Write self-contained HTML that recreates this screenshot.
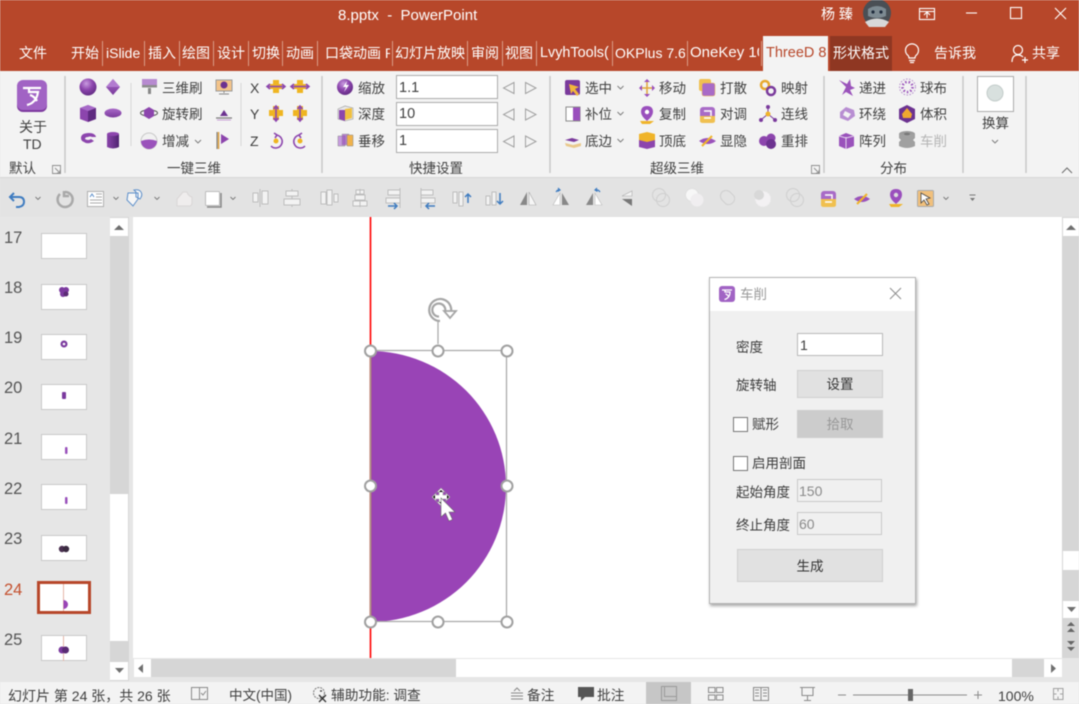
<!DOCTYPE html>
<html lang="zh"><head><meta charset="utf-8"><title>8.pptx - PowerPoint</title>
<style>
html,body{margin:0;padding:0;background:#e6e6e6}
#r{position:relative;width:1079px;height:704px;overflow:hidden;background:#e6e6e6;font-family:"Liberation Sans","Noto Sans CJK SC",sans-serif;color:#404040;font-size:13.5px;filter:blur(.4px)}
.a{position:absolute}
.t{position:absolute;white-space:pre;line-height:20px;height:20px}
.w{color:#fff;font-size:14px}
.n{font-size:16.5px;color:#555;left:4px}
.c{overflow:hidden}
.th{position:absolute;left:41px;width:44px;height:24px;background:#fff;border:1px solid #c9c9c9}
.in{position:absolute;left:396px;width:100px;height:22px;background:#fff;border:1px solid #ababab}
.d{color:#3c3c3c}
.btn{position:absolute;box-sizing:border-box;background:#e1e1e1;border:1px solid #cfcfcf;text-align:center;line-height:28px;color:#333}
.s{position:absolute;box-sizing:border-box}
svg{position:absolute;left:0;top:0}
</style></head><body><div id="r">
<!-- backgrounds -->
<div class="a" style="left:0;top:0;width:1079px;height:71px;background:#b7472a"></div>
<div class="a" style="left:0;top:71px;width:1079px;height:106px;background:#f3f3f3"></div>
<div class="a" style="left:0;top:177px;width:1079px;height:1px;background:#d6d6d6"></div>
<div class="a" style="left:0;top:178px;width:1079px;height:39px;background:#e3e3e3"></div>
<div class="a" style="left:133px;top:217px;width:929px;height:441px;background:#fff"></div>
<div class="a" style="left:763px;top:36px;width:65px;height:35px;background:#f3f3f3"></div>
<div class="a" style="left:830px;top:36px;width:62px;height:35px;background:#8f3722"></div>
<!-- side scrollbar -->
<div class="a" style="left:110px;top:217px;width:19px;height:464px;background:#d6d6d6"></div>
<div class="a" style="left:110px;top:218px;width:18px;height:18px;background:#fff"></div>
<div class="a" style="left:110px;top:494px;width:18px;height:147px;background:#fff"></div>
<div class="a" style="left:110px;top:662px;width:18px;height:18px;background:#fff"></div>
<!-- right scrollbar -->
<div class="a" style="left:1062px;top:217px;width:17px;height:441px;background:#d6d6d6"></div>
<div class="a" style="left:1063px;top:218px;width:16px;height:18px;background:#fff"></div>
<div class="a" style="left:1063px;top:551px;width:16px;height:19px;background:#fff"></div>
<div class="a" style="left:1063px;top:601px;width:16px;height:17px;background:#fff"></div>
<!-- h scrollbar -->
<div class="a" style="left:133px;top:658px;width:946px;height:24px;background:#e6e6e6"></div>
<div class="a" style="left:134px;top:659px;width:910px;height:18px;background:#d6d6d6"></div>
<div class="a" style="left:134px;top:659px;width:17px;height:18px;background:#fff"></div>
<div class="a" style="left:456px;top:659px;width:556px;height:18px;background:#fff"></div>
<div class="a" style="left:1044px;top:659px;width:18px;height:18px;background:#fff"></div>
<!-- status bar -->
<div class="a" style="left:0;top:682px;width:1079px;height:22px;background:#f3f3f3"></div>
<div class="a" style="left:646px;top:682px;width:45px;height:22px;background:#c6c6c6"></div>

<!-- title text -->
<span class="t w" style="left:338px;top:6px;font-size:15px">8.pptx  -  PowerPoint</span>
<span class="t w" style="left:821px;top:4px;font-size:14px">杨 臻</span>
<!-- tabs -->
<span class="t w" style="left:19px;top:43px">文件</span>
<span class="t w" style="left:71px;top:43px">开始</span>
<span class="t w" style="left:106px;top:43px">iSlide</span>
<span class="t w" style="left:148px;top:43px">插入</span>
<span class="t w" style="left:182px;top:43px">绘图</span>
<span class="t w" style="left:217px;top:43px">设计</span>
<span class="t w" style="left:252px;top:43px">切换</span>
<span class="t w" style="left:286px;top:43px">动画</span>
<span class="t w c" style="left:325px;top:43px;width:65px">口袋动画 PA</span>
<span class="t w" style="left:395px;top:43px">幻灯片放映</span>
<span class="t w" style="left:471px;top:43px">审阅</span>
<span class="t w" style="left:505px;top:43px">视图</span>
<span class="t w c" style="left:540px;top:43px;width:70px;font-size:14.4px">LvyhTools(</span>
<span class="t w c" style="left:615px;top:43px;width:70px;font-size:14px">OKPlus 7.6</span>
<span class="t w c" style="left:690px;top:43px;width:69px;font-size:15px">OneKey 10</span>
<span class="t" style="left:766px;top:43px;font-size:14.5px;color:#b7472a">ThreeD 8</span>
<span class="t w" style="left:833px;top:43px">形状格式</span>
<span class="t w" style="left:934px;top:43px">告诉我</span>
<span class="t w" style="left:1032px;top:43px">共享</span>

<!-- ribbon text -->
<span class="t" style="left:19px;top:117px;font-size:14px">关于</span>
<span class="t" style="left:23px;top:134px;font-size:14px">TD</span>
<span class="t" style="left:9px;top:159px">默认</span>
<span class="t" style="left:167px;top:159px">一键三维</span>
<span class="t" style="left:409px;top:159px">快捷设置</span>
<span class="t" style="left:650px;top:159px">超级三维</span>
<span class="t" style="left:880px;top:159px">分布</span>
<span class="t" style="left:162px;top:79px">三维刷</span>
<span class="t" style="left:162px;top:105px">旋转刷</span>
<span class="t" style="left:162px;top:132px">增减</span>
<span class="t" style="left:250px;top:78px;font-size:14px">X</span>
<span class="t" style="left:250px;top:104px;font-size:14px">Y</span>
<span class="t" style="left:250px;top:131px;font-size:14px">Z</span>
<span class="t" style="left:358px;top:79px">缩放</span>
<span class="t" style="left:358px;top:105px">深度</span>
<span class="t" style="left:358px;top:132px">垂移</span>
<div class="in" style="top:75px"></div><div class="in" style="top:102px"></div><div class="in" style="top:129px"></div>
<span class="t" style="left:399px;top:78px;font-size:14.5px">1.1</span>
<span class="t" style="left:399px;top:104px;font-size:14.5px">10</span>
<span class="t" style="left:399px;top:131px;font-size:14.5px">1</span>
<span class="t" style="left:585px;top:79px">选中</span><span class="t" style="left:585px;top:105px">补位</span><span class="t" style="left:585px;top:132px">底边</span>
<span class="t" style="left:659px;top:79px">移动</span><span class="t" style="left:659px;top:105px">复制</span><span class="t" style="left:659px;top:132px">顶底</span>
<span class="t" style="left:720px;top:79px">打散</span><span class="t" style="left:720px;top:105px">对调</span><span class="t" style="left:720px;top:132px">显隐</span>
<span class="t" style="left:781px;top:79px">映射</span><span class="t" style="left:781px;top:105px">连线</span><span class="t" style="left:781px;top:132px">重排</span>
<span class="t" style="left:859px;top:79px">递进</span><span class="t" style="left:859px;top:105px">环绕</span><span class="t" style="left:859px;top:132px">阵列</span>
<span class="t" style="left:920px;top:79px">球布</span><span class="t" style="left:920px;top:105px">体积</span><span class="t" style="left:920px;top:132px;color:#b5b5b5">车削</span>
<div class="s" style="left:977px;top:76px;width:37px;height:36px;background:#fff;border:1px solid #ababab"></div>
<span class="t" style="left:982px;top:114px">换算</span>

<!-- thumbnails -->
<span class="t n" style="top:228px">17</span><span class="t n" style="top:278px">18</span><span class="t n" style="top:328px">19</span><span class="t n" style="top:378px">20</span><span class="t n" style="top:429px">21</span><span class="t n" style="top:479px">22</span><span class="t n" style="top:529px">23</span><span class="t n" style="top:580px;color:#c4512f">24</span><span class="t n" style="top:630px">25</span>
<div class="th" style="top:233px"></div><div class="th" style="top:284px"></div><div class="th" style="top:334px"></div><div class="th" style="top:384px"></div><div class="th" style="top:434px"></div><div class="th" style="top:484px"></div><div class="th" style="top:535px"></div><div class="th" style="top:635px"></div>
<div class="s" style="left:37px;top:581px;width:54px;height:33px;background:#fff;border:3px solid #b7472a"></div>

<!-- status text -->
<span class="t" style="left:8px;top:686px;font-size:14px">幻灯片 第 24 张，共 26 张</span>
<span class="t" style="left:229px;top:686px;font-size:13.5px">中文(中国)</span>
<span class="t" style="left:331px;top:686px;font-size:13.7px">辅助功能: 调查</span>
<span class="t" style="left:527px;top:686px;font-size:13.7px">备注</span>
<span class="t" style="left:597px;top:686px;font-size:13.7px">批注</span>
<span class="t" style="left:998px;top:686px;font-size:14px">100%</span>

<!-- main svg -->
<svg width="1079" height="704" viewBox="0 0 1079 704" fill="none">
<defs>
<radialGradient id="g1" cx=".4" cy=".3" r=".75"><stop offset="0" stop-color="#c99be0"/><stop offset=".5" stop-color="#8c45ad"/><stop offset="1" stop-color="#5f2a80"/></radialGradient>
<linearGradient id="g2" x1="0" y1="0" x2="1" y2="0"><stop offset="0" stop-color="#8a45ab"/><stop offset="1" stop-color="#4f2470"/></linearGradient>
<linearGradient id="g3" x1="0" y1="0" x2="0" y2="1"><stop offset="0" stop-color="#a969c8"/><stop offset="1" stop-color="#7a3a9c"/></linearGradient>
</defs>
<!-- window controls -->
<circle cx="877" cy="13" r="14" fill="#4a4f55"/><path d="M865 22q12-7 24 0l-4 5h-16z" fill="#d8d8d8"/><path d="M868 9q9-6 18 0v7q-9 4-18 0z" fill="#7d8a92"/><circle cx="873" cy="12" r="1.600" fill="#1e2a3c"/><circle cx="881" cy="12" r="1.600" fill="#1e2a3c"/>
<g stroke="#fff" stroke-width="1.100"><rect x="919.500" y="8.500" width="15" height="11"/><path d="M919 11.500h16M924 15l3-3 3 3M927 12v6"/><path d="M966 13h11"/><rect x="1010.500" y="7.500" width="11" height="11"/><path d="M1055 8l11 11M1066 8l-11 11"/></g>
<!-- tab separators -->
<g stroke="#d99c87" stroke-width="1"><path d="M102.500 41v25M144.500 41v25M179.500 41v25M213.500 41v25M248.500 41v25M282.500 41v25M317.500 41v25M392.500 41v25M467.500 41v25M502.500 41v25M536.500 41v25M612.500 41v25M687.500 41v25M761.500 41v25"/></g>
<!-- bulb / person -->
<g stroke="#fff" stroke-width="1.200"><path d="M909 58q0-2-2-3.500a6.500 6.500 0 1 1 10 0q-2 1.500-2 3.500zM909 60.500h6M910 62.500h4"/><circle cx="1018" cy="50" r="4.500"/><path d="M1012 62q0-7 6-7 3 0 5 2M1022 60h6M1025 57v6"/></g>
<!-- ribbon separators -->
<g stroke="#c9c9c9" stroke-width="1.500"><path d="M65 76v97M322 76v97M550 76v97M824 76v97M963 76v97M1026 76v97"/></g>
<g stroke="#d6d6d6" stroke-width="1"><path d="M131 83v63M241 83v63"/></g>
<g stroke="#8e8e8e" stroke-width=".9"><path d="M52.500 165.500h8v8h-8zM55 168l5 5M60 170v3h-3M811.500 165.500h8v8h-8zM814 168l5 5M819 170v3h-3"/></g>
<path d="M1062 173l5-5 5 5" stroke="#6a6a6a"/>
<!-- logo -->
<rect x="17" y="81" width="30" height="31" rx="6" fill="#7d3a9e"/><rect x="17" y="80" width="30" height="30" rx="6" fill="#a163c4"/>
<path d="M23 88h18M29 88v4h9q-1 7-5 10-2 2-6 3M30 95q4 1 7 6" stroke="#fff" stroke-width="2.200" fill="none"/>
<!-- 3D shapes -->
<circle cx="88" cy="87" r="8.500" fill="url(#g1)"/>
<path d="M113 79l7 8-7 8-7-8z" fill="url(#g3)"/><path d="M113 79l7 8h-14z" fill="#b27bd0"/>
<path d="M80 108l8-3 8 3v11l-8 3-8-3z" fill="#8c45ad"/><path d="M88 111v11l8-3v-11z" fill="#5f2a80"/><path d="M80 108l8-3 8 3-8 3z" fill="#a76ac8"/>
<ellipse cx="113" cy="113" rx="8.500" ry="4.500" fill="url(#g3)"/>
<path d="M81 138q0-5 8-5 6 0 7 4l-4 0q-2-1-4 0-3 0-3 2 3 2 6 0l3 2q-6 4-10 1-3-1-3-4z" fill="#8c45ad"/>
<path d="M107 134q6-3 12 0v13q-6 3-12 0z" fill="url(#g2)"/><ellipse cx="113" cy="134" rx="6" ry="2" fill="#8c45ad"/>
<!-- brush etc -->
<rect x="142" y="79" width="15" height="6" fill="#b78ad0"/><rect x="142" y="85" width="15" height="2.500" fill="#8d8d8d"/><path d="M148 88h3v6h-3z" fill="#888"/>
<rect x="216" y="80" width="16" height="11" fill="#f3c48a" stroke="#9a9a9a"/><circle cx="224" cy="85" r="3.500" fill="#6c3290"/><path d="M224 91v2M219 94h10" stroke="#888"/>
<ellipse cx="149" cy="113" rx="8.500" ry="3" stroke="#555"/><path d="M149 107l5 3v6l-5 3-5-3v-6z" fill="#8c45ad"/>
<path d="M216 118h16" stroke="#777" stroke-width="1.200"/><path d="M224 110l4 6h-8z" fill="#6c3290"/><path d="M217 120h14" stroke="#c9a0d8"/>
<circle cx="149" cy="141" r="8" fill="#f1f1f1" stroke="#c8c8c8"/><path d="M141 141a8 8 0 0 0 16 0q-8-3-16 0z" fill="#9a52bb"/>
<path d="M218.500 132v17" stroke="#d89b3a" stroke-width="1.500"/><path d="M217 132v17" stroke="#555" stroke-width=".8"/><path d="M221 134l8 5-8 5z" fill="#8c45ad"/>
<path d="M195 140l3 3 3-3M617.500 86l3 3 3-3M617.500 112l3 3 3-3M617.500 139l3 3 3-3M992 140l3 3 3-3M35.500 197l2.500 2.500 2.500-2.500M113.500 197l2.500 2.500 2.500-2.500M154.500 197l2.500 2.500 2.500-2.500M230.500 197l2.500 2.500 2.500-2.500M943.500 197l2.500 2.500 2.500-2.500" stroke="#777" stroke-width=".9"/>
<!-- axis icons -->
<g fill="#efb521"><path d="M273 80h6v13h-6zM270 84h12v5h-12z"/><path d="M297 80h6v13h-6zM294 84h12v5h-12z"/><path d="M269 110h14v6h-14zM273 106h6v14h-6z" /><path d="M293 110h14v6h-14zM297 106h6v14h-6z"/><circle cx="276" cy="141" r="2.500"/><circle cx="300" cy="141" r="2.500"/></g>
<g stroke="#8c45ad" stroke-width="1.600"><path d="M268 86.500h16M270 84l-3 2.500 3 2.500M282 84l3 2.500-3 2.500M292 86.500h16M294 84l-3 2.500 3 2.500M306 84l3 2.500-3 2.500"/><path d="M276 106v15M273.500 109l2.500-3 2.500 3M273.500 118l2.500 3 2.500-3M300 106v15M297.500 109l2.500-3 2.500 3M297.500 118l2.500 3 2.500-3"/><path d="M276 135a6.500 6.500 0 1 1-5 11M274 133l3 2-2 3M300 135a6.500 6.500 0 1 0 5 11M302 133l-3 2 2 3"/></g>
<!-- quick set icons -->
<circle cx="345" cy="87" r="8" fill="url(#g1)"/><path d="M347 81l-4 6h3l-2 5 5-7h-3z" fill="#fff"/>
<path d="M338 109l7-3 8 2v11l-8 2-7-2z" fill="#e8e8e8" stroke="#999" stroke-width=".6"/><path d="M339 110l6 0v11l-6-2z" fill="#8c45ad"/><path d="M345 109l7-1v10l-7 2z" fill="#f0c040"/>
<path d="M338 136h7v10h-7z" fill="#c79be0" stroke="#888" stroke-width=".5"/><path d="M342 134h7v11h-7z" fill="#9a52bb" opacity=".7" stroke="#888" stroke-width=".5"/><path d="M347 135h6v11h-6z" fill="#f0b24a" stroke="#888" stroke-width=".5"/>
<g stroke="#a0a0a0" stroke-width="1"><path d="M514 82.500v11l-10.500-5.500zM514 109v11l-10.500-5.500zM514 136v11l-10.500-5.500zM525.500 82.500v11l10.500-5.500zM525.500 109v11l10.500-5.500zM525.500 136v11l10.500-5.500z"/></g>
<!-- super 3D icons -->
<rect x="565" y="80" width="15" height="15" rx="2" fill="#7a3a9c"/><path d="M569 84l10 3-4 2 4 5-2 2-4-5-2 3z" fill="#f2b63a"/>
<rect x="566" y="107" width="14" height="14" fill="#fff" stroke="#8a8a8a"/><rect x="573" y="107.500" width="7" height="13" fill="#9a4fbd"/>
<path d="M565 140l7-2 7 2-5 2z" fill="#7a3a9c"/><path d="M565 143l8 2 8-2v3l-7 2-8-2z" fill="#e9c98c"/>
<g stroke="#e2a63a" stroke-width="1.500"><path d="M640 88h14M647 81v14"/></g><path d="M647 79l3 3h-6zM647 97l3-3h-6zM639 88l3 3v-6zM655 88l-3 3v-6z" fill="#9a4fbd"/>
<path d="M647 106q-6 0-6 6 0 4 6 9 6-5 6-9 0-6-6-6z" fill="#9a4fbd"/><circle cx="647" cy="112" r="2.200" fill="#fff"/><path d="M640 121h14l-4 3h-8z" fill="#f0b429"/>
<path d="M639 134l8-2 8 2v7l-8 2-8-2z" fill="#f0b429"/><path d="M639 140l8 2 8-2v7l-8 2-8-2z" fill="#8c45ad"/>
<rect x="699" y="79" width="12" height="12" rx="2" fill="#f0c050"/><rect x="702" y="83" width="13" height="13" rx="2" fill="#a86bc7" stroke="#f0c050" stroke-width=".5"/>
<rect x="700" y="107" width="15" height="15" rx="3" fill="#a86bc7"/><path d="M700 116h15v5q0 2-3 2h-9q-3 0-3-2z" fill="#f0c050"/><path d="M704 111h7v5M704 118h7" stroke="#fff" stroke-width="1.500"/>
<path d="M699 141q8-6 17 0-8 6-17 0z" fill="#9a52bb"/><path d="M702 146l10-10" stroke="#f0b429" stroke-width="2"/>
<g stroke="#e8a92e" stroke-width="2.500"><circle cx="765" cy="85" r="4"/></g><g stroke="#7a3a9c" stroke-width="2.500"><circle cx="771" cy="91" r="4"/></g>
<path d="M768 108v6M768 114l-6 5M768 114l6 5" stroke="#7a3a9c"/><circle cx="768" cy="114" r="2.500" fill="#f0b429"/><circle cx="768" cy="107" r="2" fill="#7a3a9c"/><circle cx="761" cy="120" r="2" fill="#7a3a9c"/><circle cx="775" cy="120" r="2" fill="#7a3a9c"/>
<circle cx="764" cy="141" r="5" fill="#8c45ad"/><circle cx="771" cy="138" r="4.500" fill="#8c45ad"/><circle cx="771" cy="144" r="5" fill="#6c3290"/>
<!-- distribute icons -->
<path d="M846 87l-7-7 8 4 3-5 1 7 4 2-5 2 3 6-7-4-4 3z" fill="#9a52bb"/>
<circle cx="907.500" cy="87" r="8" stroke="#b48acb" stroke-width="1" stroke-dasharray="1.500 1.500"/><circle cx="907.500" cy="87" r="5" stroke="#9a52bb" stroke-width="2.500" stroke-dasharray="1.500 2"/>
<path d="M840 112l6-5 8 3 1 6-7 5-8-3z" fill="#b88ed2"/><path d="M845 111l6 3-3 4-5-3z" fill="#f3f3f3"/>
<path d="M907 105l8 4v10l-8 4-8-4v-10z" fill="#6c3290"/><path d="M907 108l5 6-1 4h-8l-1-4z" fill="#f0a830"/>
<path d="M839 136l7-3 8 3v10l-8 3-7-3z" fill="#9a52bb"/><path d="M846 137v12M839 136l7 2 8-2" stroke="#e6d4ef"/>
<ellipse cx="907" cy="134" rx="8" ry="3" fill="#9a9a9a"/><path d="M899 134h16v4l-2 2 2 2v4q-8 4-16 0v-4l2-2-2-2z" fill="#a0a0a0"/><ellipse cx="907" cy="134" rx="3" ry="1.200" fill="#777"/>
<circle cx="995" cy="93" r="8" fill="#d8e0de" stroke="#c3ccca"/>
<!-- QAT -->
<path d="M14 193l-4 4 4 4M11 197h8q5 0 5 5 0 4-5 5h-3" stroke="#3f7cc0" stroke-width="2"/>
<path d="M64 191v5h5M65 192a7.500 7.500 0 1 1-5 2" stroke="#a9a9a9" stroke-width="2.500"/>
<rect x="87.500" y="191.500" width="16" height="15" fill="#fff" stroke="#b0b0b0"/><path d="M96 194h6M96 197h6M90 200h12M90 203h12" stroke="#aaa"/><path d="M90 197l2-3 2 3" stroke="#5d8fca"/>
<path d="M128 193h10v6l-5 7-6-6zM134 190q5-1 7 2 2 3-1 7l-4-2v-5z" fill="#f6f6f6" stroke="#5d8fca"/>
<path d="M177 206v-7l6-7h4q1 4 5 5v6q0 3-3 3z" fill="#efeded" stroke="#d9d6d6"/>
<rect x="205.500" y="191.500" width="14" height="14" rx="1" fill="#fff" stroke="#bbb"/><path d="M207 207h14v-14" stroke="#888" stroke-width="1.500"/>
<g stroke="#bdbdbd" fill="#f3f3f3">
<path d="M260 189v18M292 189v18M321 192h5v12h-5zM327 190h5v15h-5zM334 194h4v8h-4zM360 189v5M360 201v6M355 195h10v5h-10zM353 201h14v5h-14zM356 190h8v4h-8z"/>
<rect x="253" y="193" width="5" height="9"/><rect x="262" y="191" width="6" height="13"/><rect x="286" y="191" width="12" height="5"/><rect x="284" y="199" width="16" height="6"/>
<rect x="388" y="190" width="12" height="5"/><rect x="386" y="198" width="14" height="5"/><path d="M400 188v20"/><rect x="421" y="190" width="12" height="5"/><rect x="421" y="198" width="14" height="5"/><path d="M421 188v20"/>
<rect x="453" y="192" width="4" height="11"/><rect x="459" y="192" width="4" height="14"/><rect x="486" y="196" width="4" height="9"/><rect x="492" y="192" width="4" height="13"/>
</g>
<g stroke="#3f7cc0" stroke-width="1.500"><path d="M388 206h9M394 203l3 3-3 3M435 206h-9M429 203l-3 3 3 3M468 203v-9M465 197l3-3 3 3M500 193v11M497 201l3 3 3-3"/></g>
<path d="M527 192v13h-7z" fill="#888"/><path d="M529 192v13h7z" fill="#f6f6f6" stroke="#aaa" stroke-width=".6"/>
<path d="M560 193v12h-7z" fill="#fff" stroke="#bbb" stroke-width=".6"/><path d="M562 193v12h7z" fill="#888"/><path d="M556 192q2-3 4-2M558 188l2 2-2.500 1.500" stroke="#3f7cc0" stroke-width="1.200"/>
<path d="M593 193v12h-7z" fill="#888"/><path d="M595 193v12h7z" fill="#fff" stroke="#bbb" stroke-width=".6"/><path d="M600 192q-2-3-5-2M597 188l-2 2 2.500 1.500" stroke="#3f7cc0" stroke-width="1.200"/>
<path d="M632 191v5h-10z" fill="#f4f4f4" stroke="#aaa" stroke-width=".6"/><path d="M632 199v7l-10-7z" fill="#777"/>
<g stroke="#cfcfcf" stroke-width="1"><circle cx="659" cy="195" r="6.500"/><circle cx="663" cy="200" r="6.500"/></g>
<circle cx="692" cy="195" r="6.500" fill="#f7f7f7" stroke="#e0e0e0"/><circle cx="697" cy="200" r="6.500" fill="#f0eef0"/>
<path d="M722 192a6 6 0 0 1 8 0q2 2 4 4a6 6 0 0 1-8 8q-2-2-4-4a6 6 0 0 1 0-8z" stroke="#cfcfcf"/>
<circle cx="763" cy="199" r="8" fill="#f3f1f3" stroke="#e5e5e5" stroke-dasharray="2 1"/><circle cx="759" cy="195" r="5" fill="#d8d8d8"/>
<g stroke="#cfcfcf"><circle cx="793" cy="195" r="6.500"/><circle cx="797" cy="200" r="6.500"/></g>
<rect x="821" y="191" width="15" height="15" rx="3" fill="#a86bc7"/><path d="M821 199h15v6q0 2-3 2h-9q-3 0-3-2z" fill="#f0c050"/><path d="M825 195h7v4M825 202h7" stroke="#fff" stroke-width="1.500"/>
<path d="M854 199q8-6 16 0-8 6-16 0z" fill="#9a52bb"/><path d="M857 204l10-10" stroke="#f0b429" stroke-width="2"/>
<path d="M896 189q-6 0-6 6 0 4 6 9 6-5 6-9 0-6-6-6z" fill="#9a4fbd"/><circle cx="896" cy="195" r="2.200" fill="#ddd"/><path d="M889 204h14l-4 3h-8z" fill="#f0b429"/>
<rect x="917.500" y="190.500" width="16" height="16" rx="1" fill="#f1c07c" stroke="#aaa"/><path d="M921 193l9 5-4 1 3 5-2 1-3-5-3 3z" fill="#fff" stroke="#444" stroke-width=".8"/>
<path d="M969.500 195h6" stroke="#777"/><path d="M970 198h5l-2.500 3z" fill="#777"/>
<!-- thumbnails content -->
<g fill="#7b3a9e"><circle cx="62" cy="290" r="3"/><circle cx="66" cy="290" r="3"/><circle cx="63" cy="294" r="3"/><circle cx="66" cy="294" r="2.500" fill="#5a2b74"/></g>
<circle cx="64" cy="344" r="3.500" fill="#7b3a9e"/><circle cx="64" cy="344" r="1.300" fill="#fff"/>
<rect x="62" y="392" width="4" height="7" rx="1" fill="#7b3a9e"/><rect x="65" y="447" width="2.500" height="7" rx="1" fill="#9a52bb"/><rect x="65" y="497" width="2.500" height="7" rx="1" fill="#9a52bb"/>
<circle cx="62" cy="549" r="3.200" fill="#4a3050"/><circle cx="66" cy="549" r="3.200" fill="#3a2a40"/>
<path d="M63.500 584v27" stroke="#e6b5a8"/><path d="M63.500 600a4.500 4.500 0 0 1 0 9z" fill="#9944b6"/>
<path d="M63.500 636v25" stroke="#e6b5a8"/><circle cx="62" cy="650" r="3.500" fill="#7b3a9e"/><circle cx="65.500" cy="650" r="3.500" fill="#5a2b74"/>
<!-- scroll arrows -->
<g fill="#6f6f6f"><path d="M114 230l5-5 5 5zM115 668h9l-4.500 5zM143 664v9l-5-4.500zM1051 664v9l5-4.500zM1066 230l5-5 5 5zM1067 607h9l-4.500 5z"/></g>
<g fill="#666"><path d="M1067 626l4-4 4 4zM1067 632l4-4 4 4zM1067 641l4 4 4-4zM1067 647l4 4 4-4z"/></g>
<!-- canvas shape -->
<path d="M370.500 658V217" stroke="#f00" stroke-width="1.600"/>
<path d="M370 351A136 135.500 0 0 1 506 486.500 136 135.500 0 0 1 370 622z" fill="#9944b6"/>
<path d="M370.500 352v270" stroke="#c8502a" stroke-width="1.800"/>
<rect x="370.500" y="350.500" width="136" height="271" stroke="#a6a6a6" stroke-width="1.200"/>
<path d="M438 322v22" stroke="#a6a6a6" stroke-width="1.200"/>
<g fill="#fff" stroke="#a0a0a0" stroke-width="2"><circle cx="370.500" cy="351" r="5.500"/><circle cx="438" cy="351" r="5.500"/><circle cx="507" cy="351" r="5.500"/><circle cx="370.500" cy="486" r="5.500"/><circle cx="507" cy="486" r="5.500"/><circle cx="370.500" cy="622" r="5.500"/><circle cx="438" cy="622" r="5.500"/><circle cx="507" cy="622" r="5.500"/></g>
<g stroke="#a6a6a6" stroke-width="2.200"><path d="M450 315a11 11 0 1 0-10 6"/><path d="M445 312a6.500 6.500 0 1 0-6 4.500"/></g><path d="M444 311h12l-6 7z" fill="#fff" stroke="#a6a6a6" stroke-width="1.800"/>
<!-- cursor -->
<path d="M441 488l4 4h-2v3h3v-2l4 4-4 4v-2h-3v3h2l-4 4-4-4h2v-3h-3v2l-4-4 4-4v2h3v-3h-2z" fill="#fff" stroke="#999" stroke-width=".6"/>
<path d="M441 490l2 2h-4zM433 497l2-2v4zM449 497l-2-2v4zM441 504l2-2h-4z" fill="#000"/>
<path d="M441 498v19l4.500-4 3.500 8 3.500-1.500-3.500-7.500h6z" fill="#fff" stroke="#666" stroke-width=".6"/>
<!-- status icons -->
<g stroke="#8a8a8a" stroke-width="1"><path d="M191.500 687.500h8v12h-8zM199.500 687.500h8v12h-8M201 693l2 2 3-4"/><path d="M511 693h12M511 696h12M511 699h12M514 691l3-3 3 3" stroke="#888"/><path d="M661.500 686.500h15v14h-15zM664.500 686.500v10h12" stroke="#9a9a9a"/><path d="M708.500 687.500h6.500v5h-6.500zM716.500 687.500h6.500v5h-6.500zM708.500 695h6.500v5h-6.500zM716.500 695h6.500v5h-6.500z"/><path d="M753.500 687.500h15v13h-15zM761 687.500v13M755 690h4M755 693h4M755 696h4M763 690h4M763 693h4M763 696h4"/><path d="M800 687.500h15M802 687.500v8h11v-8M807.500 695.500v5M804 700.500h7"/><path d="M838 695h8M974 695h8M978 691v8M853 695h55M913 695h54" /><path d="M1053.500 688.500h9.500v11h-9.500zM1058 688.500v3M1058 696.500v3M1053.500 694h3M1060 694h3" stroke="#a0a0a0"/></g>
<rect x="908" y="689" width="5" height="12" fill="#666"/>
<path d="M578 687h16v10h-9l-4 4v-4h-3z" fill="#555"/>
<circle cx="319" cy="693" r="5.500" stroke="#777" stroke-dasharray="2 1"/><path d="M320 691l2 0M319 695l7 7M326 695l-7 7" stroke="#333" stroke-width="1.300"/>
</svg>

<!-- dialog -->
<div class="s" style="left:709px;top:277px;width:207px;height:327px;background:#f0f0f0;border:1px solid #b4b4b4;box-shadow:1px 2px 3px rgba(0,0,0,.35)"></div>
<div class="a" style="left:710px;top:278px;width:205px;height:33px;background:#fff"></div>
<span class="t" style="left:740px;top:285px;color:#9a9a9a">车削</span>
<span class="t d" style="left:736px;top:338px">密度</span>
<div class="s" style="left:797px;top:333px;width:86px;height:23px;background:#fff;border:1px solid #b9b9b9"></div>
<span class="t d" style="left:800px;top:335px;font-size:14px">1</span>
<span class="t d" style="left:736px;top:376px">旋转轴</span>
<div class="btn" style="left:797px;top:370px;width:86px;height:28px">设置</div>
<div class="s" style="left:733px;top:417px;width:15px;height:15px;background:#fff;border:1px solid #777"></div>
<span class="t d" style="left:752px;top:415px">赋形</span>
<div class="btn" style="left:797px;top:410px;width:86px;height:28px;background:#cccccc;border-color:#cccccc;color:#989898">拾取</div>
<div class="s" style="left:733px;top:456px;width:15px;height:15px;background:#fff;border:1px solid #777"></div>
<span class="t d" style="left:752px;top:454px">启用剖面</span>
<span class="t d" style="left:736px;top:483px">起始角度</span>
<div class="s" style="left:797px;top:479px;width:85px;height:23px;background:#f0f0f0;border:1px solid #c9c9c9"></div>
<span class="t" style="left:799px;top:481px;font-size:14px;color:#8a8a8a">150</span>
<span class="t d" style="left:736px;top:516px">终止角度</span>
<div class="s" style="left:797px;top:512px;width:85px;height:23px;background:#f0f0f0;border:1px solid #c9c9c9"></div>
<span class="t" style="left:799px;top:514px;font-size:14px;color:#8a8a8a">60</span>
<div class="btn" style="left:737px;top:549px;width:146px;height:33px;line-height:33px">生成</div>
<svg width="1079" height="704" viewBox="0 0 1079 704" fill="none">
<rect x="719" y="286" width="16" height="16" rx="3" fill="#a163c4"/><path d="M722 290h10M725 290v2h5q0 4-2.500 6-1 1-3 1.500M725.500 294q2 .5 3.500 3" stroke="#fff" stroke-width="1.300"/>
<path d="M890 288l11 11M901 288l-11 11" stroke="#8d8d8d" stroke-width="1"/>
</svg>
</div></body></html>
